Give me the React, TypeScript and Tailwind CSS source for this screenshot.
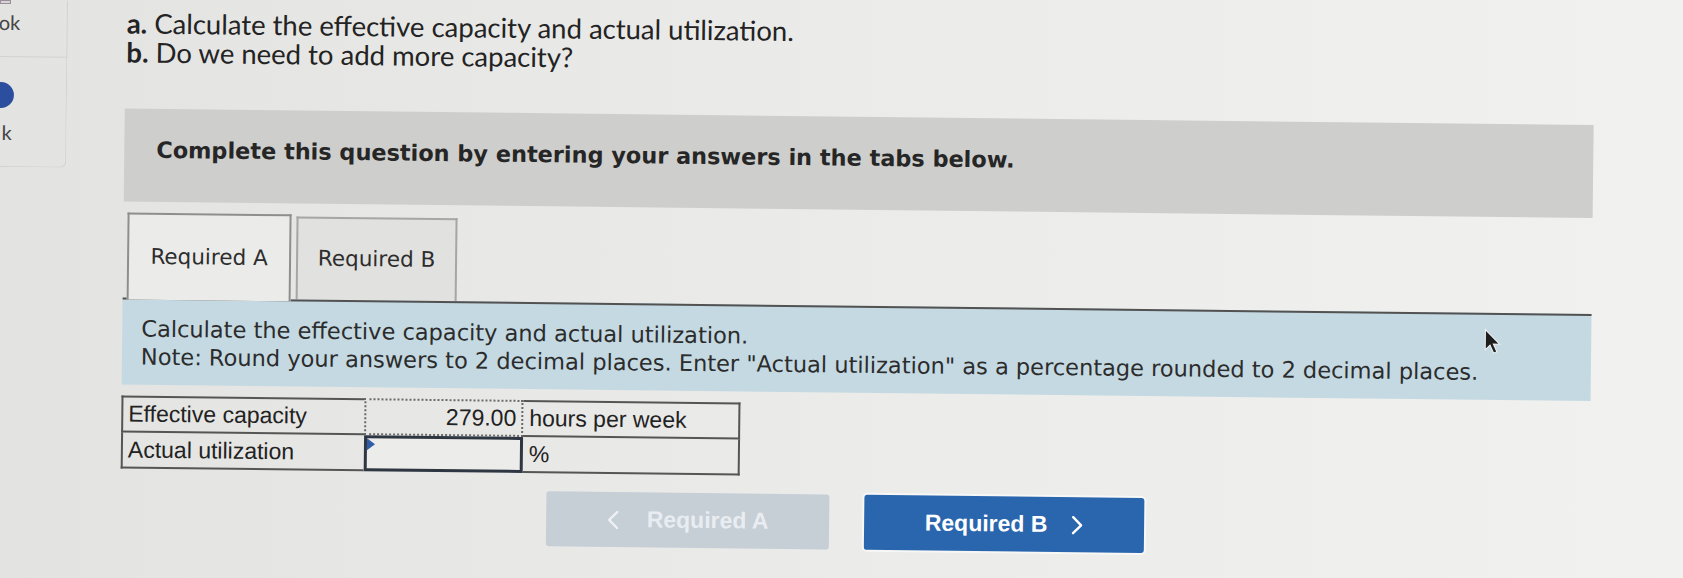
import React from "react";

const VERD = "font-['DejaVu_Sans',sans-serif]";

function Sidebar() {
  return (
    <div className="flex w-[68px] shrink-0 flex-col font-['Lato',sans-serif] text-[#454545]">
      <div className="relative h-[57px] border-r border-b border-[#d2d2d0]">
        <div className="absolute left-0 top-0 h-[4px] w-[11px] border border-[#9a8f99] bg-[#d9d3d8]" />
        <p className="pt-[9px] text-[20px] leading-[26px] -ml-[1px]">ok</p>
      </div>
      <div className="flex h-[110px] flex-col rounded-br-[6px] border-r border-b border-[#d2d2d0]">
        <div className="-ml-[11px] mt-[25px] h-[26px] w-[26px] rounded-full bg-[#2c4e9f]" />
        <p className="ml-[3px] mt-[11px] text-[20px] leading-[26px]">k</p>
      </div>
    </div>
  );
}

function Chevron({ dir, color }: { dir: "l" | "r"; color: string }) {
  return (
    <svg width="12" height="20" viewBox="0 0 12 20" fill="none">
      <polyline
        points={dir === "l" ? "10,2 2,10 10,18" : "2,2 10,10 2,18"}
        stroke={color}
        strokeWidth="2.4"
        strokeLinecap="round"
        strokeLinejoin="round"
      />
    </svg>
  );
}

export default function App() {
  return (
    <div className="relative h-[578px] w-[1683px] overflow-hidden bg-linear-to-r from-[#e3e3e1] via-[#ebebe9] to-[#f1f1ef]">
      <div className="relative flex h-[600px] w-[1700px] origin-top-left rotate-[0.65deg]">
        <Sidebar />
        <main className="ml-[58px] flex w-[1469px] flex-col">
          <div className="h-[64px] pl-[1px] pt-[7px] font-['Lato',sans-serif] text-[27.5px] leading-[29px] text-[#232323]">
            <p>
              <span className="font-bold">a.</span> Calculate the effective capacity and actual utilization.
            </p>
            <p>
              <span className="font-bold">b.</span> Do we need to add more capacity?
            </p>
          </div>

          <div className="mt-[43px] h-[93px] bg-[#cececc] pl-[32px] pt-[28px]">
            <p className={`${VERD} text-[22.4px] font-bold leading-[26px] text-[#262626]`}>
              Complete this question by entering your answers in the tabs below.
            </p>
          </div>

          <div className={`mt-[11px] flex items-end gap-[5px] pl-[4px] ${VERD} text-[21.5px] text-[#2d2d2d]`}>
            <div className="relative z-10 -mb-[2px] flex h-[87px] w-[164px] items-center justify-center border-2 border-b-0 border-[#8e8e8c] bg-[#ebebe9]">
              Required A
            </div>
            <div className="flex h-[83px] w-[161px] items-center justify-center border-2 border-b-0 border-[#a6a6a4] bg-[#e1e1df]">
              Required B
            </div>
          </div>

          <div className={`h-[87px] border-t-2 border-[#525252] bg-[#c4d9e2] pl-[19px] pt-[16px] ${VERD} text-[22.5px] leading-[27.5px] text-[#2c2c2c]`}>
            <p>Calculate the effective capacity and actual utilization.</p>
            <p>
              Note: Round your answers to 2 decimal places. Enter "Actual utilization" as a percentage rounded to 2 decimal places.
            </p>
          </div>

          <div className="mt-[11px] flex w-[619px] flex-col font-['Liberation_Sans',sans-serif] text-[23px] text-[#222]">
            <div className="flex h-[37px]">
              <div className="flex w-[243px] items-center border-y-2 border-l-2 border-[#555] pl-[5px]">
                Effective capacity
              </div>
              <div className="flex w-[159px] items-center justify-end border-2 border-dotted border-[#6a6a6a] pr-[5px]">
                279.00
              </div>
              <div className="flex flex-1 items-center border-y-2 border-r-2 border-[#555] pl-[6px]">
                hours per week
              </div>
            </div>
            <div className="flex h-[36px]">
              <div className="flex w-[243px] items-center border-b-2 border-l-2 border-[#555] pl-[5px]">
                Actual utilization
              </div>
              <div className="relative w-[159px] border-[3px] border-[#2e3642] bg-[#ececea]">
                <div className="absolute left-0 top-0 h-0 w-0 border-y-[6px] border-l-[8px] border-y-transparent border-l-[#2f5ca6]" />
              </div>
              <div className="flex flex-1 items-center border-r-2 border-b-2 border-[#555] pl-[6px]">%</div>
            </div>
          </div>

          <div className="ml-[426px] mt-[18px] flex gap-[35px] font-['Liberation_Sans',sans-serif] text-[23px] font-bold">
            <div className="flex h-[55px] w-[283px] items-center justify-center gap-[28px] rounded-[3px] bg-[#c6ced6] text-[#e9edf1]">
              <Chevron dir="l" color="#eef1f4" />
              <span>Required A</span>
            </div>
            <div className="flex h-[55px] w-[280px] items-center justify-center gap-[24px] rounded-[3px] bg-[#2a66ae] text-white shadow-[0_0_0_2px_rgba(255,255,255,0.6)]">
              <span>Required B</span>
              <Chevron dir="r" color="#ffffff" />
            </div>
          </div>
        </main>

        <svg
          className="absolute left-[1488px] top-[311px]"
          width="17"
          height="28"
          viewBox="0 0 16 25"
        >
          <path d="M1 1 L1 20 L5.5 15.5 L9 23 L12 21.7 L8.6 14.5 L14.5 14.5 Z" fill="#1e1e1e" stroke="#f2f2f2" strokeWidth="1" />
        </svg>
      </div>
    </div>
  );
}
